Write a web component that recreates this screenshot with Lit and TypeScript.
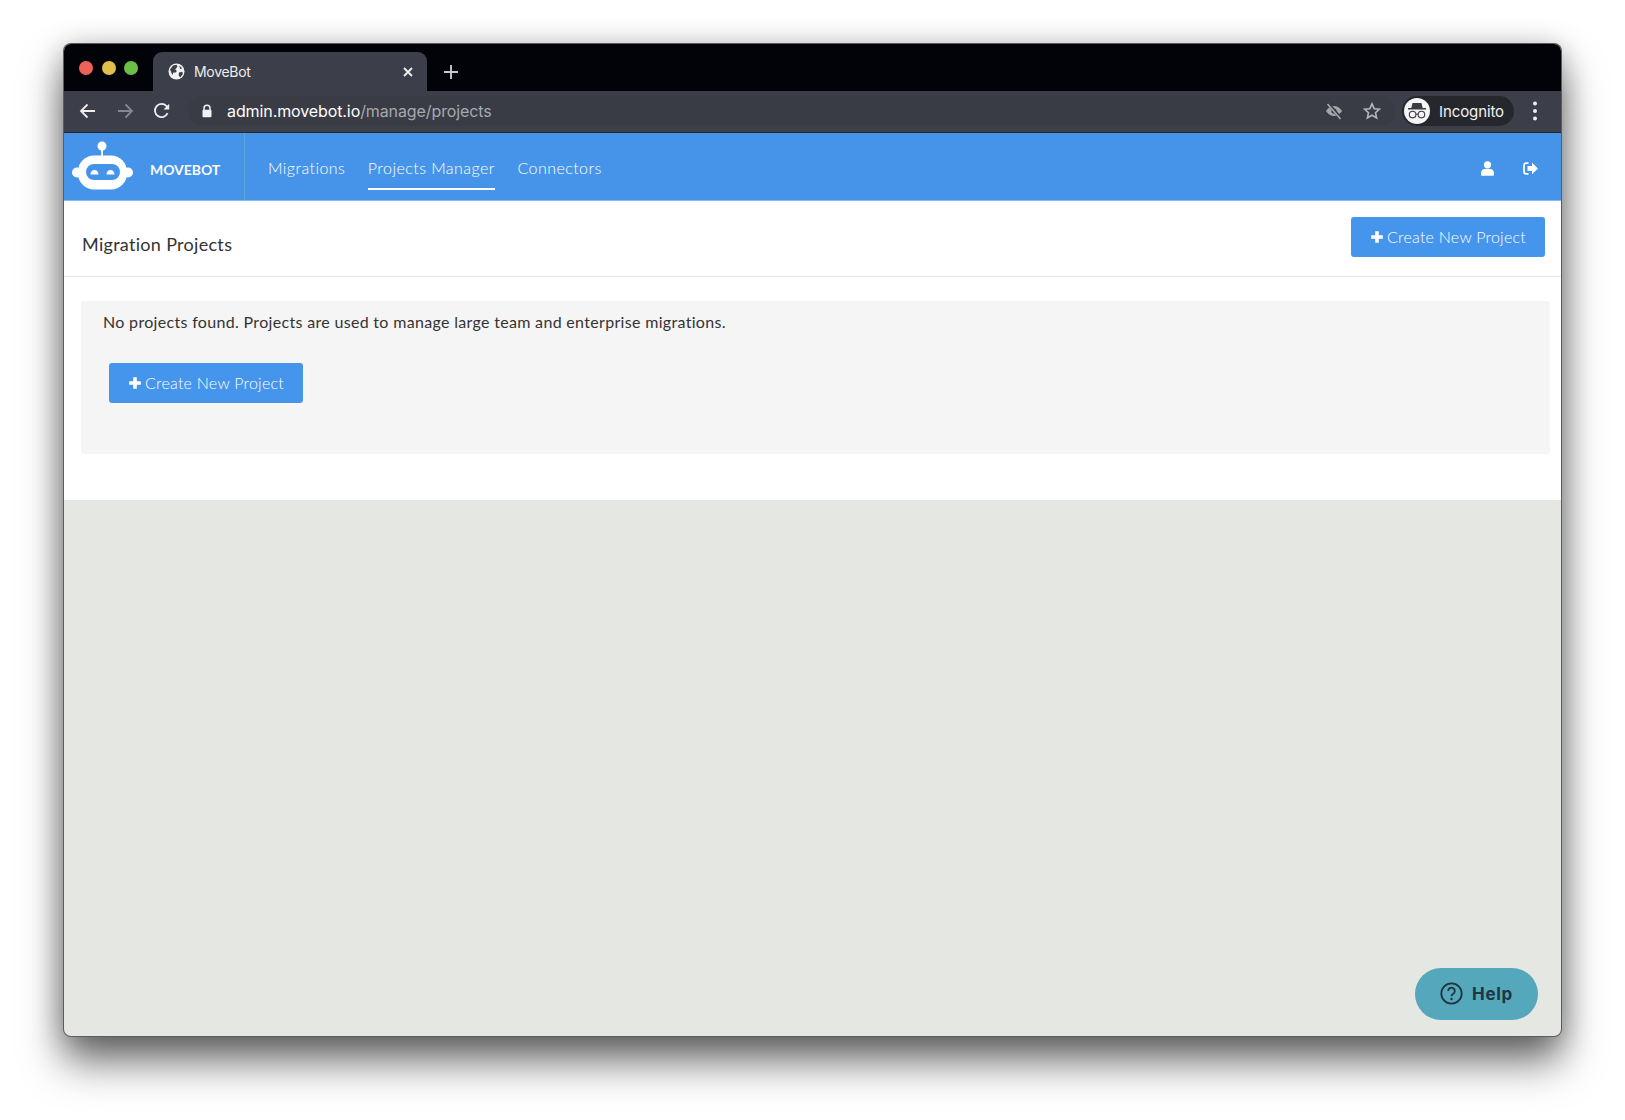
import { LitElement, html, css, svg } from "lit";
import { customElement } from "lit/decorators.js";

const plus = svg`<svg class="plus" viewBox="0 0 14 14" width="14" height="14"><path d="M5.2 1.2h3.6v4h4v3.6h-4v4H5.2v-4h-4V5.2h4z" fill="#fff"/></svg>`;

@customElement("app-root")
export class AppRoot extends LitElement {
  static styles = css`
    :host { display: block; height: 1120px; background: #fff; padding: 44px 64px 84px; box-sizing: border-box; font-family: "Lato", "Liberation Sans", sans-serif; overflow: hidden; }
    .win { position: relative; height: 992px; width: 1497px; border-radius: 7px; background: #e5e7e2; display: flex; flex-direction: column; overflow: visible; box-shadow: 0 0 0 1px #5c5c5c, 0 26px 42px rgba(0,0,0,.55), 0 4px 30px rgba(0,0,0,.28); }
    .strip { height: 47px; flex: none; background: #020308; border-radius: 7px 7px 0 0; display: flex; align-items: flex-end; padding-left: 15px; box-sizing: border-box; }
    .lights { display: flex; gap: 8.6px; align-self: flex-start; margin-top: 17px; width: 74px; }
    .lights i { width: 14px; height: 14px; border-radius: 50%; display: block; }
    .tab { width: 274px; height: 39px; background: #3c3f4a; border-radius: 9px 9px 0 0; display: flex; align-items: center; padding: 0 13px 0 15px; box-sizing: border-box; color: #eceded; font: 14px "Inter", "Liberation Sans", sans-serif; gap: 9px; }
    .tab span { flex: 1; letter-spacing: -0.3px; }
    .newtab { margin: 0 0 12px 17px; display: block; }
    .bar { height: 42px; flex: none; background: #3c3f4a; border-bottom: 1px solid #26272b; box-sizing: border-box; display: flex; align-items: center; padding: 0 0 1px 15px; }
    .navs { display: flex; gap: 19px; align-items: center; width: 109px; flex: none; }
    .omni { flex: none; width: 1207px; height: 30px; border-radius: 15px; background: #393b45; display: flex; align-items: center; padding: 0 14px 0 13px; box-sizing: border-box; margin-right: 7px; }
    .url { margin-left: 14px; font: 16px "Inter", "Liberation Sans", sans-serif; letter-spacing: -0.1px; color: #a7a9ae; flex: 1; }
    .url b { font-weight: 400; color: #fff; }
    .omni .ic { margin-left: 20px; display: block; }
    .pill { flex: none; width: 112px; height: 30px; border-radius: 15px; background: #26272c; display: flex; align-items: center; padding-left: 1px; box-sizing: border-box; gap: 9px; color: #f2f2f2; font: 15px "Inter", "Liberation Sans", sans-serif; letter-spacing: -0.1px; }
    .avatar { width: 26px; height: 26px; border-radius: 50%; background: #f5f5f5; display: flex; align-items: center; justify-content: center; flex: none; margin-left: 1px; }
    .dots { margin-left: 19px; display: block; }
    .nav { height: 68px; flex: none; background: #4694ea; display: flex; align-items: stretch; border-bottom: 1px solid #8abcf2; box-sizing: border-box; color: #fff; }
    .brand { width: 181px; flex: none; display: flex; align-items: center; border-right: 1px solid #55a8d8; padding-left: 8px; gap: 16px; box-sizing: border-box; }
    .brand svg { display: block; margin-top: -1px; }
    .brand span { font-weight: 700; font-size: 14px; letter-spacing: -0.05px; margin-top: 5px; opacity: .97; }
    .links { display: flex; gap: 22.5px; margin-left: 23px; }
    .links a { font-size: 16px; letter-spacing: 0.45px; display: flex; align-items: center; height: 57px; box-sizing: border-box; color: #fff; font-weight: 300; padding-top: 14px; border-bottom: 2px solid transparent; }
    .links a.on { border-bottom-color: #fff; }
    .right { margin-left: auto; display: flex; align-items: center; gap: 29px; padding: 3px 23px 0 0; }
    .head { background: #fff; height: 76px; flex: none; border-bottom: 1px solid #e6e6e6; box-sizing: border-box; display: flex; justify-content: space-between; padding: 16px 16px 0 18px; }
    h1 { font-size: 18px; font-weight: 400; margin: 15px 0 0; color: #333; letter-spacing: .3px; line-height: 24px; }
    .btn { height: 40px; width: 194px; border: 0; border-radius: 3px; background: #4695ec; display: flex; align-items: center; justify-content: center; gap: 3px; font: 300 16px "Lato", "Liberation Sans", sans-serif; letter-spacing: .25px; padding: 0 0 2px; box-sizing: border-box; color: #fff; }
    .btn .plus { display: block; margin-top: 1px; }
    .content { background: #fff; height: 223px; flex: none; padding: 24px 11px 0 17px; box-sizing: border-box; }
    .panel { height: 153px; background: #f5f5f5; border-radius: 3px; padding: 11px 21px 0 22px; box-sizing: border-box; }
    .panel p { margin: 0; font-size: 16px; line-height: 20px; color: #333; letter-spacing: .32px; }
    .panel .btn { margin: 31px 0 0 6px; }
    .help { position: absolute; right: 23px; bottom: 16.5px; width: 123px; height: 52px; border-radius: 26px; background: #55a7bb; display: flex; align-items: center; justify-content: center; gap: 9px; color: #1f3540; font: 700 17px "Inter", "Liberation Sans", sans-serif; letter-spacing: .7px; }
  `;

  render() {
    return html`<div class="win">
      <div class="strip">
        <div class="lights"><i style="background:#ef6357"></i><i style="background:#e2bf4b"></i><i style="background:#6cc04a"></i></div>
        <div class="tab">
          <svg width="17" height="17" viewBox="0 0 17 17"><circle cx="8.5" cy="8.5" r="8" fill="#f1f1f1"/><path d="M2 6.5l3-4 3.5-.7 1 2-2.3 2.4 1.6 1.8-1 1.6-2.4-.2-1 2.6zM11 9.5l3.3-.8.6 2.4-2.7 3.4-1.6-2.3zM11.2 2.6l3 2.6-2 .8z" fill="#3c3f4a"/></svg>
          <span>MoveBot</span>
          <svg width="12" height="12" viewBox="0 0 12 12"><path d="M2 2l8 8M10 2l-8 8" stroke="#f0f0f0" stroke-width="1.8"/></svg>
        </div>
        <svg class="newtab" width="14" height="14" viewBox="0 0 14 14"><path d="M7 0v14M0 7h14" stroke="#c9cacc" stroke-width="1.9"/></svg>
      </div>
      <div class="bar">
        <div class="navs">
          <svg width="18" height="16" viewBox="0 0 18 16"><path d="M16 8H2M8.5 1.5L2 8l6.5 6.5" fill="none" stroke="#eee" stroke-width="1.8"/></svg>
          <svg width="18" height="16" viewBox="0 0 18 16"><path d="M2 8h14M9.5 1.5L16 8l-6.5 6.5" fill="none" stroke="#85878c" stroke-width="1.8"/></svg>
          <svg width="18" height="18" viewBox="0 0 18 18"><path d="M14.6 11.2A6.6 6.6 0 1 1 13.4 4L15 5.5" fill="none" stroke="#eee" stroke-width="1.8"/><path d="M16.2 1.8v5.6h-5.6z" fill="#eee"/></svg>
        </div>
        <div class="omni">
          <svg width="12" height="14" viewBox="0 0 12 14"><path d="M3 6V4.2a3 3 0 0 1 6 0V6" fill="none" stroke="#f2f2f2" stroke-width="1.5"/><rect x="1.5" y="5.8" width="9" height="7.4" rx="1" fill="#f2f2f2"/></svg>
          <div class="url"><b>admin.movebot.io</b>/manage/projects</div>
          <svg class="ic" width="18" height="18" viewBox="0 0 18 18"><path d="M1 9s3-5 8-5 8 5 8 5-3 5-8 5-8-5-8-5z" fill="#a5a6aa"/><circle cx="9" cy="9" r="2.6" fill="#393b45"/><path d="M3 1.5l13 15" stroke="#393b45" stroke-width="3.4"/><path d="M2.5 2l13 15" stroke="#a5a6aa" stroke-width="1.7"/></svg>
          <svg class="ic" width="18" height="18" viewBox="0 0 18 18"><path d="M9 1.8l2.2 4.9 5.2.5-3.9 3.5 1.1 5.2L9 13.2l-4.6 2.7 1.1-5.2-3.9-3.5 5.2-.5z" fill="none" stroke="#b5b6b9" stroke-width="1.6"/></svg>
        </div>
        <div class="pill">
          <div class="avatar"><svg width="20" height="18" viewBox="0 0 20 18"><path d="M5.5 1h9l1.2 5H19v1.4H1V6h3.3z" fill="#3a3b40"/><circle cx="5.6" cy="12.6" r="3.3" fill="none" stroke="#3a3b40" stroke-width="1.1"/><circle cx="14.4" cy="12.6" r="3.3" fill="none" stroke="#3a3b40" stroke-width="1.1"/><path d="M8.9 12.2h2.2" stroke="#3a3b40" stroke-width="1.1"/></svg></div>
          <span>Incognito</span>
        </div>
        <svg class="dots" width="4" height="20" viewBox="0 0 4 20"><circle cx="2" cy="2.5" r="2" fill="#eee"/><circle cx="2" cy="10" r="2" fill="#eee"/><circle cx="2" cy="17.5" r="2" fill="#eee"/></svg>
      </div>
      <div class="nav">
        <div class="brand">
          <svg width="62" height="50" viewBox="0 0 62 50"><rect x="29.2" y="5" width="1.8" height="11" fill="#fff"/><circle cx="30" cy="5" r="4.5" fill="#fff"/><circle cx="5" cy="31.5" r="5" fill="#fff"/><circle cx="56" cy="31.5" r="5" fill="#fff"/><rect x="6" y="14.5" width="49" height="34" rx="16" fill="#fff"/><rect x="14" y="23" width="34" height="16" rx="8" fill="#4694ea"/><path d="M18.5 33.5a4 4.5 0 0 1 8 0zM34.5 33.5a4 4.5 0 0 1 8 0z" fill="#fff"/></svg>
          <span>MOVEBOT</span>
        </div>
        <div class="links">
          <a>Migrations</a>
          <a class="on">Projects Manager</a>
          <a>Connectors</a>
        </div>
        <div class="right">
          <svg width="13" height="15" viewBox="0 0 13 15"><circle cx="6.5" cy="3.8" r="3.6" fill="#fff"/><path d="M0 12.2C0 9.4 2 8 3.8 8h5.4C11 8 13 9.4 13 12.2V13.4c0 .9-.7 1.4-1.4 1.4H1.4C.7 14.800 0 14.300 0 13.400z" fill="#fff"/></svg>
          <svg width="15" height="13" viewBox="0 0 15 13"><path d="M5.500 1.200H3A2 2 0 0 0 1 3.200v6.600a2 2 0 0 0 2 2h2.500" fill="none" stroke="#fff" stroke-width="1.7"/><path d="M9 .8l6 5.700-6 5.700V9H4.500V4H9z" fill="#fff"/></svg>
        </div>
      </div>
      <div class="head">
        <h1>Migration Projects</h1>
        <button class="btn">${plus}<span>Create New Project</span></button>
      </div>
      <div class="content">
        <div class="panel">
          <p>No projects found. Projects are used to manage large team and enterprise migrations.</p>
          <button class="btn">${plus}<span>Create New Project</span></button>
        </div>
      </div>
      <div class="help">
        <svg width="23" height="23" viewBox="0 0 23 23"><circle cx="11.5" cy="11.5" r="10.2" fill="none" stroke="#1f3540" stroke-width="1.8"/><path d="M8.2 9a3.3 3.3 0 1 1 5 2.800c-1.100.7-1.700 1.200-1.700 2.500" fill="none" stroke="#1f3540" stroke-width="1.8"/><circle cx="11.5" cy="17" r="1.2" fill="#1f3540"/></svg>
        <span>Help</span>
      </div>
    </div>`;
  }
}
